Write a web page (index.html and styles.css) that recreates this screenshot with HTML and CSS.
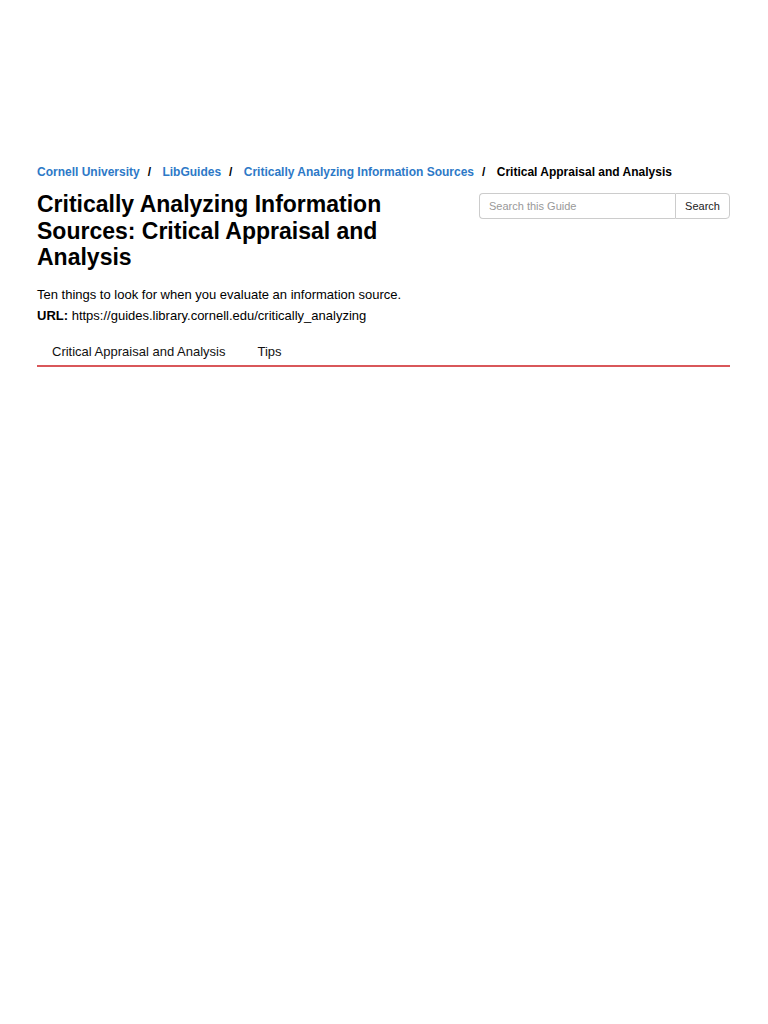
FILE: index.html
```html
<!DOCTYPE html>
<html lang="en">
<head>
<meta charset="utf-8">
<title>Critical Appraisal and Analysis - Critically Analyzing Information Sources</title>
<link rel="stylesheet" href="styles.css">
</head>
<body>
<div class="page">
  <nav class="breadcrumb">
    <a href="#">Cornell University</a><span class="sep">/</span>
    <a href="#">LibGuides</a><span class="sep">/</span>
    <a href="#">Critically Analyzing Information Sources</a><span class="sep">/</span>
    <span class="current">Critical Appraisal and Analysis</span>
  </nav>
  <div class="title-row">
    <h1 class="title">Critically Analyzing Information Sources: Critical Appraisal and Analysis</h1>
    <form class="search">
      <input class="search-input" type="text" placeholder="Search this Guide">
      <button class="search-btn" type="button">Search</button>
    </form>
  </div>
  <p class="desc">Ten things to look for when you evaluate an information source.</p>
  <p class="url"><strong>URL:</strong> https://guides.library.cornell.edu/critically_analyzing</p>
  <ul class="tabs">
    <li class="tab"><a href="#">Critical Appraisal and Analysis</a></li>
    <li class="tab"><a href="#">Tips</a></li>
  </ul>
</div>
</body>
</html>
```

FILE: styles.css
```css
html, body {
  margin: 0;
  padding: 0;
  background: #fff;
}
body {
  font-family: "Liberation Sans", Arial, sans-serif;
  color: #000;
}
.page {
  padding: 164px 38px 0 37px;
}
.breadcrumb {
  font-size: 12px;
  font-weight: bold;
  line-height: 16px;
  white-space: nowrap;
}
.breadcrumb a {
  color: #2d79c7;
  text-decoration: none;
}
.breadcrumb .sep {
  color: #000;
  margin: 0 8px 0 8px;
}
.breadcrumb .current {
  color: #000;
}
.title-row {
  display: flex;
  justify-content: space-between;
  align-items: flex-start;
  margin-top: 11px;
}
.title {
  margin: 0;
  width: 400px;
  font-size: 23px;
  line-height: 26.5px;
  font-weight: bold;
}
.search {
  display: flex;
  margin: 2px 0 0 0;
}
.search-input {
  box-sizing: border-box;
  width: 196px;
  height: 26px;
  margin: 0;
  padding: 0 9px;
  border: 1px solid #ccc;
  border-right: none;
  border-radius: 4px 0 0 4px;
  font-family: "Liberation Sans", Arial, sans-serif;
  font-size: 11px;
  color: #555;
  outline: none;
}
.search-input::placeholder {
  color: #999;
}
.search-btn {
  box-sizing: border-box;
  width: 55px;
  height: 26px;
  margin: 0;
  padding: 0;
  border: 1px solid #ccc;
  border-radius: 0 4px 4px 0;
  background: #fff;
  font-family: "Liberation Sans", Arial, sans-serif;
  font-size: 11px;
  color: #222;
}
.desc {
  margin: 13px 0 0 0;
  font-size: 13px;
  line-height: 21px;
}
.url {
  margin: 0;
  font-size: 13px;
  line-height: 21px;
}
.tabs {
  list-style: none;
  margin: 8px 0 0 0;
  padding: 0;
  display: flex;
  border-bottom: 2px solid #d9575a;
}
.tab a {
  display: block;
  padding: 8px 15px 3px 15px;
  margin-right: 2px;
  font-size: 13px;
  line-height: 20px;
  color: #111;
  text-decoration: none;
}
```
